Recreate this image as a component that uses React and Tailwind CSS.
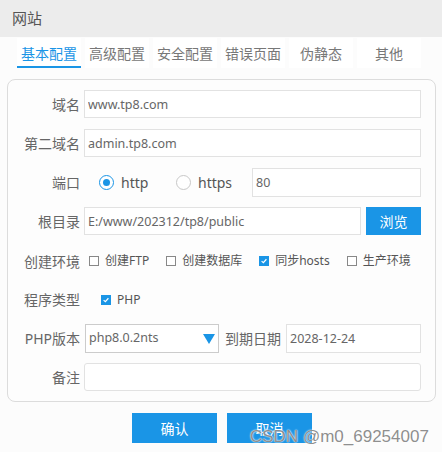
import { useState } from 'react';

const TABS = ['基本配置', '高级配置', '安全配置', '错误页面', '伪静态', '其他'];

function Field({ label, children, className = '' }) {
  return (
    <div className={`flex items-center ${className}`}>
      <label className="w-[76px] shrink-0 pr-[4px] text-right text-[14px] text-[#666]">{label}</label>
      {children}
    </div>
  );
}

function TextInput({ value, className = '' }) {
  return (
    <input
      defaultValue={value}
      className={`h-full border border-[#e2e2e2] bg-white px-[3px] text-[12.5px] text-[#666] outline-none ${className}`}
    />
  );
}

function Check({ checked, label }) {
  return (
    <span className="flex items-center gap-[6px] text-[12px] text-[#555]">
      {checked ? (
        <span className="flex h-[10px] w-[10px] items-center justify-center bg-[#1a95e6]">
          <svg viewBox="0 0 10 10" className="h-[8px] w-[8px]">
            <path d="M2 5.2 L4.2 7.2 L8 2.8" fill="none" stroke="#fff" strokeWidth="1.5" />
          </svg>
        </span>
      ) : (
        <span className="h-[10px] w-[10px] border border-[#888] bg-white" />
      )}
      {label}
    </span>
  );
}

function Radio({ checked, label }) {
  return (
    <span className="flex items-center gap-[7px] text-[14px] text-[#555]">
      <span
        className={`flex h-[15px] w-[15px] items-center justify-center rounded-full border ${
          checked ? 'border-[#1a95e6]' : 'border-[#c8c8c8]'
        } bg-white`}
      >
        {checked && <span className="h-[7px] w-[7px] rounded-full bg-[#1a95e6]" />}
      </span>
      {label}
    </span>
  );
}

export default function App() {
  const [tab, setTab] = useState(0);

  return (
    <div
      className="relative h-[452px] w-[442px] overflow-hidden bg-[#fcfcfc]"
      style={{ fontFamily: '"Noto Sans", "Noto Sans CJK SC", sans-serif' }}
    >
      <div className="flex h-[37px] items-center bg-[#ececec] pl-[12px] text-[15px] text-[#555]">网站</div>

      <div className="ml-[17px] mt-[1px] flex h-[30px] gap-[4px]">
        {TABS.map((t, i) => (
          <button
            key={t}
            onClick={() => setTab(i)}
            className={`flex w-[64px] items-center justify-center bg-white pt-[3px] text-[14px] ${
              i === tab ? 'border-b-2 border-[#1a95e6] text-[#1a95e6]' : 'border-b-2 border-white text-[#777]'
            }`}
          >
            {t}
          </button>
        ))}
      </div>

      <div className="ml-[7px] mt-[11px] w-[429px] rounded-[8px] border border-[#dcdcdc] bg-[#fdfdfd] pb-[10px] pt-[10px]">
        <Field label="域名" className="h-[28px]">
          <TextInput value="www.tp8.com" className="w-[337px]" />
        </Field>
        <Field label="第二域名" className="mt-[11px] h-[28px]">
          <TextInput value="admin.tp8.com" className="w-[337px]" />
        </Field>
        <Field label="端口" className="mt-[11px] h-[29px]">
          <div className="ml-[15px] w-[77px]">
            <Radio checked label="http" />
          </div>
          <div className="w-[76px]">
            <Radio label="https" />
          </div>
          <TextInput value="80" className="w-[169px]" />
        </Field>
        <Field label="根目录" className="mt-[10px] h-[28px]">
          <TextInput value="E:/www/202312/tp8/public" className="w-[277px]" />
          <button className="ml-[5px] h-full w-[55px] bg-[#1a95e6] text-[14px] text-white">浏览</button>
        </Field>
        <Field label="创建环境" className="mt-[12px] h-[28px]">
          <div className="ml-[5px] flex gap-[17px]">
            <Check label="创建FTP" />
            <Check label="创建数据库" />
            <Check checked label="同步hosts" />
            <Check label="生产环境" />
          </div>
        </Field>
        <Field label="程序类型" className="mt-[10px] h-[28px]">
          <div className="ml-[17px] mt-[2px]">
            <Check checked label="PHP" />
          </div>
        </Field>
        <Field label="PHP版本" className="mt-[11px] h-[29px]">
          <div className="relative ml-[1px] flex h-full w-[134px] items-center border border-[#ccc] bg-white pl-[3px] text-[12.5px] text-[#666]">
            php8.0.2nts
            <svg viewBox="0 0 12 10" className="absolute right-[3px] top-[9px] h-[10px] w-[12px]">
              <path d="M0 0 H12 L6 10 Z" fill="#1a95e6" />
            </svg>
          </div>
          <span className="ml-[6px] w-[61px] text-[14px] text-[#666]">到期日期</span>
          <TextInput value="2028-12-24" className="w-[135px]" />
        </Field>
        <Field label="备注" className="mt-[10px] h-[28px]">
          <TextInput value="" className="w-[337px] rounded-[3px]" />
        </Field>
      </div>

      <div className="mt-[11px] flex justify-center gap-[10px] pl-[2px]">
        <button className="h-[30px] w-[85px] bg-[#1a95e6] text-[14px] text-white">确认</button>
        <button className="h-[30px] w-[85px] bg-[#1a95e6] text-[14px] text-white">取消</button>
      </div>

      <span
        className="pointer-events-none absolute left-[250px] top-[424px] text-[17px] text-[#707070]/80 [text-shadow:0_0_2px_#fff,0_0_1px_#fff]"
        style={{ fontFamily: '"Liberation Sans", Arial, sans-serif' }}
      >
        CSDN @m0_69254007
      </span>
    </div>
  );
}
